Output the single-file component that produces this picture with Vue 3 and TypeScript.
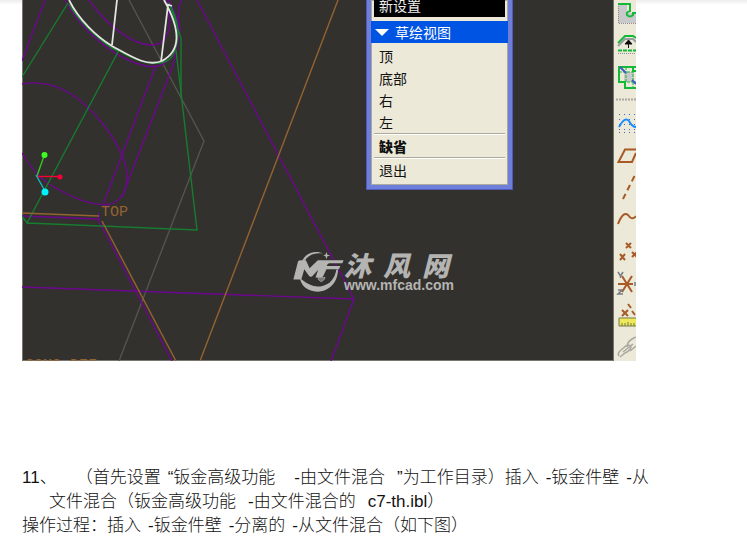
<script setup lang="ts">
interface Segment {
  text: string
  gap?: 'narrow' | 'medium' | 'wide'
}

interface Line {
  indent?: boolean
  segments: Segment[]
}

const lines: Line[] = [
  {
    segments: [
      { text: '11、' },
      { text: '（首先设置', gap: 'wide' },
      { text: '“钣金高级功能', gap: 'narrow' },
      { text: '-由文件混合', gap: 'wide' },
      { text: '”为工作目录）插入', gap: 'medium' },
      { text: '-钣金件壁', gap: 'narrow' },
      { text: '-从', gap: 'narrow' },
    ],
  },
  {
    indent: true,
    segments: [
      { text: '文件混合（钣金高级功能' },
      { text: '-由文件混合的', gap: 'medium' },
      { text: 'c7-th.ibl', gap: 'medium' },
      { text: '）' },
    ],
  },
  {
    segments: [
      { text: '操作过程：插入' },
      { text: '-钣金件壁', gap: 'narrow' },
      { text: '-分离的', gap: 'narrow' },
      { text: '-从文件混合（如下图）', gap: 'narrow' },
    ],
  },
]

const views: string[] = ['顶', '底部', '右', '左']
const gridRows: number[] = [114, 119, 124, 129, 132]
const gridCols: number[] = [619, 624, 629, 634]
</script>

<template>
  <main class="page">
    <figure class="shot">
      <div class="canvas">
        <svg class="model" viewBox="22 0 591 361" preserveAspectRatio="xMinYMin slice" aria-hidden="true">
          <g class="grey">
            <path d="M129 0L204 141L119 361" />
          </g>
          <g class="purple">
            <path d="M45 0L22 61M22 84Q65 76 103 124Q129 158 127 181Q125 200 108 205Q82 205 49 184Q35 175 22 153" />
            <path d="M89 0C103 20 130 46 154 45C172 42 172 18 166 0" />
            <path d="M65 0C80 30 115 59 145 66C176 71 184 38 176 15L169 0M181 0Q176 14 180 30L174 60" />
            <path d="M156 65L103 205M175 60L122 197" />
            <path d="M197 0L354 299L331 361M22 287L354 299" />
            <path d="M22 216L98 219L172 361M99 213V219" />
          </g>
          <g class="green">
            <path d="M68 3L22 77M119 50L27 223L22 216M27 223L197 230L176 50" />
            <path d="M69 4C80 25 110 49 119 51C140 64 169 71 175 50Q183 27 169 3L181 38V96" />
          </g>
          <g class="orange">
            <path d="M338 0L200 361M22 213L99 216M102 221L176 361" />
          </g>
          <g class="white">
            <path d="M69 0C79 20 97 37 112 46C132 57 147 67 162 61Q190 46 164 0M117 0L112 45M168 5L161 62M166 4L172 6" />
          </g>
          <path class="axis-y" d="M37 176L44 156" />
          <circle cx="44.500" cy="155" r="3" fill="#3bff22" />
          <path class="axis-x" d="M37 176.500H60" />
          <circle cx="60" cy="177" r="2.500" fill="#f50032" />
          <path class="axis-z" d="M36 175L45 191" />
          <circle cx="45" cy="192" r="3.500" fill="#00f4ff" />
          <text class="label" x="101" y="216">TOP</text>
          <text class="label" x="25" y="369">COMO DEF</text>
        </svg>

        <nav class="menu" aria-label="草绘视图">
          <div class="menu-inner">
            <button class="chosen" type="button">新设置</button>
            <h2 class="menu-title">
              <svg viewBox="0 0 14 7" aria-hidden="true"><path d="M0 0H14L7 7Z" fill="#fff" /></svg>
              <span>草绘视图</span>
            </h2>
            <div class="items">
              <button v-for="view in views" :key="view" type="button">{{ view }}</button>
              <hr />
              <button class="strong" type="button">缺省</button>
              <hr />
              <button type="button">退出</button>
            </div>
          </div>
        </nav>

        <div class="watermark">
          <svg class="mark" viewBox="38 64 154 124" aria-hidden="true">
            <path d="M65 95C78 65 110 62 130 72C104 68 84 76 74 93Z" />
            <path d="M139 67L142 75L151 77L142 80L139 89L136 80L129 77L136 75Z" />
            <path d="M39 150L53 96Q55 92 62 92H77L88 116L113 92H191L187 101H147Q142 102 140 109H181L177 119H139L129 140Q127 144 120 144H106L114 121L96 140Q91 144 86 139L72 119L63 150Z" />
            <path d="M59 146C74 160 96 174 121 171C151 167 165 145 169 120H174C174 153 153 186 112 187C83 187 61 169 59 146Z" />
            <path d="M113 144H135L131 152L123 157L115 151Z" fill="#777" stroke="#b4b4b3" stroke-width="2" />
          </svg>
          <div class="brand">
            <div class="brand-name"><span>沐</span><span>风</span><span>网</span></div>
            <div class="brand-url">www.mfcad.com</div>
          </div>
        </div>
      </div>

      <svg class="tools" viewBox="613 0 23 361" preserveAspectRatio="xMinYMin slice" aria-hidden="true">
        <path d="M613.500 0V361" stroke="#77756b" />
        <!-- flat wall -->
        <path d="M618 4H627V13H636V23H618Z" fill="#c9c9cb" />
        <path d="M618.500 4V23.500H636" class="dots" />
        <path d="M618 4H630V11Q626 12 627 15Q630 18 633 15V13H636" class="tool-green" />
        <!-- offset wall -->
        <path d="M618 46L625 39H633L636 42" stroke="#9b9ba2" stroke-width="2" />
        <path d="M618 43L625 36H633L636 38" class="tool-green" />
        <path d="M628.500 48V42M625 44L628.500 40L632 44Z" fill="#000" stroke="#111" />
        <path d="M618 50.500H636" stroke="#16b83a" stroke-width="2" stroke-dasharray="4 1" />
        <path d="M618 53.500H636" class="dots" />
        <!-- merged walls -->
        <path d="M624 72H634V82H624Z" fill="#c9c9cb" />
        <path d="M636 67H619V82H625V88H636M633 67V71H636" class="tool-green" />
        <path d="M626 67V82H636M619 72H633V88" stroke="#16b83a" stroke-dasharray="3 1" />
        <path d="M620 67L626 73M632 80L636 84" stroke="#3f5bc2" stroke-width="2" />
        <path d="M616 99.500H636" stroke="#aaa9a2" stroke-width="2" stroke-dasharray="2 1" />
        <!-- sketch -->
        <template v-for="y in gridRows" :key="y">
          <rect v-for="x in gridCols" :key="x" :x="x" :y="y" width="1" height="1" fill="#4665c8" />
        </template>
        <path d="M619 127Q625 116 629 121Q632 127 636 127" stroke="#198cff" stroke-width="2" />
        <!-- plane, axis, curve -->
        <path d="M636 149.500H625L618.500 162H632L636 153" class="tool-brown" />
        <path d="M634.500 176L623 199" class="tool-brown" stroke-dasharray="6 4" />
        <path d="M618 224Q623 211 628 215Q632 221 636 216" class="tool-brown" />
        <!-- points -->
        <path d="M626 243L631 248M631 243L626 248M620 254L625 260M625 254L620 260M632 252L637 257M637 252L632 257" class="tool-brown" />
        <!-- coordinate system -->
        <path d="M618 284H633M622 276L632 292M632 276L622 292" class="tool-brown" />
        <path d="M618 272L620.500 276L623 272M620.500 276V278M618 290H622L618 294H623M635 282V286" stroke="#777b85" stroke-width="1.500" />
        <!-- reference points and ruler -->
        <path d="M622 310L628 316M628 310L622 316M628 304L631 308M632 311L635 315" class="tool-brown" />
        <path d="M619 318H637V326H619Z" fill="#eee85b" stroke="#777b45" />
        <path d="M622 326V323M625 326V323M628 326V322M631 326V323M634 326V323" stroke="#777b45" />
        <!-- chain link -->
        <path d="M619 356Q617 353 621 350L626 346Q630 344 631 347Q630 351 625 353L620 357M627 347Q627 342 632 339L636 337M630 351L636 346M623 352L633 344" stroke="#aaa8a0" stroke-width="1.500" />
      </svg>
    </figure>

    <section class="text">
      <p v-for="(line, i) in lines" :key="i" :class="{ indent: line.indent }">
        <span v-for="(s, j) in line.segments" :key="j" :class="s.gap">{{ s.text }}</span>
      </p>
    </section>
  </main>
</template>

<style>
body {
  margin: 0;
  background: #fff;
}
</style>

<style scoped>
.page {
  padding: 0 92px 0 22px;
  background: linear-gradient(#ededed, #fff 5px);
  font-family: "Liberation Sans", "Noto Sans CJK SC", sans-serif;
}

.shot {
  display: grid;
  grid-template-columns: 1fr 23px;
  margin: 0 19px 0 0;
  background: #33312d;
}

.canvas {
  position: relative;
  overflow: hidden;
  box-shadow: inset 1px -1px #77766f;
}

.model,
.tools {
  display: block;
  width: 100%;
  fill: none;
}

.model {
  stroke-width: 1.4;
}

.tools {
  background: #ece9d8;
}

.grey { stroke: #55534e; }
.purple { stroke: #6d0790; }
.green { stroke: #167c30; }
.orange { stroke: #936331; }
.white { stroke: #e4e4e0; stroke-width: 1.8; }
.axis-x { stroke: #f50032; }
.axis-y { stroke: #39c426; }
.axis-z { stroke: #12b8bd; }

.label {
  fill: #936331;
  font: 15px "Liberation Mono", monospace;
}

.dots { stroke: #8d8d8d; stroke-dasharray: 1 1; }
.tool-green { stroke: #16b83a; stroke-width: 2; }
.tool-brown { stroke: #a75a26; stroke-width: 2; }

.menu {
  position: absolute;
  top: 0;
  left: 344px;
  width: 137px;
  padding: 0 5px 5px;
  background: #6d7edb;
  box-shadow: inset 1px -1px #5059b5, inset -1px 0 #5059b5;
}

.menu-inner {
  background: #ece9d8;
  box-shadow: inset 0 0 0 1px #aaa99c;
  padding-bottom: 4px;
}

.menu button {
  display: block;
  width: 100%;
  height: 22px;
  padding: 0 5px;
  border: 0;
  background: none;
  color: #111;
  font: 14px/22px "Noto Sans CJK SC", sans-serif;
  text-align: left;
}

.menu .chosen {
  width: 131px;
  height: 17px;
  margin: 0 3px;
  background: #000;
  color: #eee;
  line-height: 11px;
  padding-bottom: 6px;
}

.menu-title {
  display: flex;
  align-items: center;
  gap: 6px;
  height: 22px;
  margin: 4px 0 2px;
  padding-left: 4px;
  background: #0054e3;
  color: #fff;
  font: 14px/22px "Noto Sans CJK SC", sans-serif;
}

.menu-title svg {
  width: 14px;
  height: 7px;
}

.items {
  padding: 0 3px;
}

.items hr {
  height: 1px;
  margin: 0 0 1px;
  border: 0;
  background: #aaa99c;
  box-shadow: 0 1px #fff;
}

.menu .strong {
  font-weight: 900;
}

.watermark {
  position: absolute;
  top: 251px;
  left: 271px;
  display: flex;
  color: #b4b4b3;
}

.mark {
  width: 51px;
  height: 41px;
  fill: #b4b4b3;
}

.brand-name {
  display: flex;
  gap: 12px;
  font: italic 900 27px/27px "Noto Sans CJK SC", sans-serif;
}

.brand-url {
  font: 700 14px/14px "Liberation Sans", sans-serif;
}

.text {
  padding: 105px 0 5px;
  color: #111;
  font-size: 17px;
  font-weight: 300;
}

.text p {
  display: flex;
  margin: 0;
  line-height: 24px;
  white-space: nowrap;
}

.text .indent { padding-left: 27px; }
.narrow { margin-left: 7px; }
.medium { margin-left: 12px; }
.wide { margin-left: 19px; }
</style>
